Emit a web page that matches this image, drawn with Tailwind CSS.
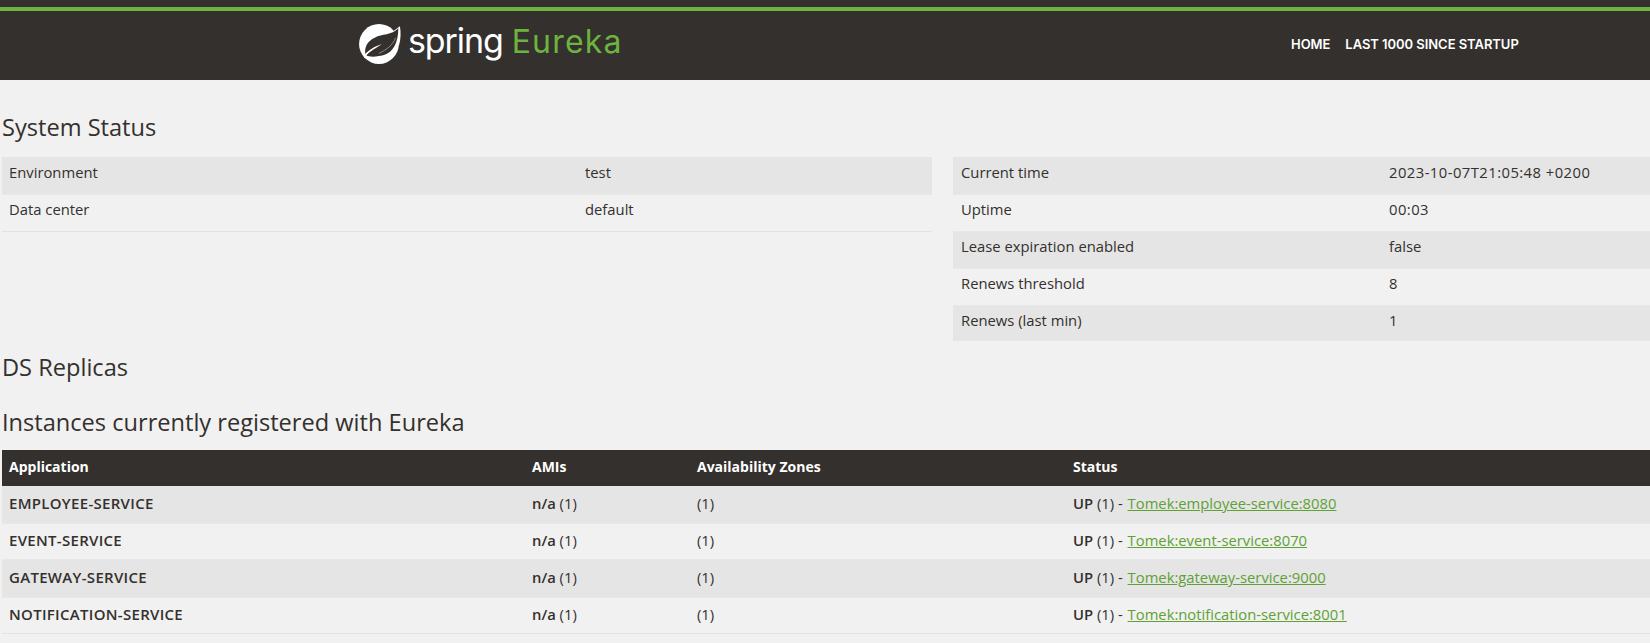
<!DOCTYPE html>
<html lang="en">
<head>
<meta charset="utf-8">
<title>Eureka</title>
<script src="https://cdn.jsdelivr.net/npm/@tailwindcss/browser@4"></script>
</head>
<body class="bg-[#f1f1f1] text-[#34302d] font-['Open_Sans',sans-serif] text-[14.8px] overflow-hidden h-[643px]">
<header class="h-[80px] bg-[#34302d] pt-[7px]">
  <div class="h-[4px] bg-[#6db33f]"></div>
  <div class="relative h-[69px] flex items-center">
    <div class="flex items-center ml-[358px] mt-[-4px]">
      <svg width="44" height="44" viewBox="4 4 42 42" class="shrink-0">
        <circle cx="24" cy="25" r="19" fill="#fff"/>
        <path fill="#fff" d="M44 8C45 14 45 20 43 27L36 14Z"/>
        <path fill="#34302d" d="M42.500 10C36 17 27 15 20 19C13 22 10 28 11 34.500C14 31 20 27 27 25C21 29 15 32 12 36C16 38 24 37 30 35C37 33 42.500 24 42.500 10Z"/>
        <path fill="none" stroke="#8f8c8a" stroke-width="0.900" d="M40 19C37 26 32 30 24 34"/>
        <circle cx="11" cy="37" r="1.500" fill="#fff"/>
      </svg>
      <span class="ml-[6px] text-white text-[34px] leading-none font-['Inter',sans-serif] tracking-[-1.100px] mt-[-5px]">spring</span>
      <span class="ml-[9px] text-[#6db33f] text-[32px] leading-none font-['Inter',sans-serif] font-normal tracking-[1.200px] mt-[-3px]">Eureka</span>
    </div>
    <nav class="absolute left-[1291px] top-[24px] flex gap-[15px] text-white text-[13px] tracking-[-0.050px] font-semibold font-['Inter',sans-serif]">
      <a>HOME</a><a>LAST 1000 SINCE STARTUP</a>
    </nav>
  </div>
</header>
<main class="pl-[2px]">
  <h1 class="text-[23.6px] leading-[28px] mt-[33px] mb-[16px] font-normal">System Status</h1>
  <div class="flex gap-[21px] items-start">
    <table class="w-[930px] table-fixed border-collapse">
      <colgroup><col class="w-[575px]"><col></colgroup>
      <tbody>
        <tr class="h-[37px] bg-[#e5e5e5] border-b border-[#e8e8e8]"><td class="pl-[7px] pb-[7px]">Environment</td><td class="pl-[8px] pb-[7px]">test</td></tr>
        <tr class="h-[37px] border-b border-[#e2e2e2]"><td class="pl-[7px] pb-[7px]">Data center</td><td class="pl-[8px] pb-[7px]">default</td></tr>
      </tbody>
    </table>
    <table class="flex-1 table-fixed border-collapse">
      <colgroup><col class="w-[428px]"><col></colgroup>
      <tbody>
        <tr class="h-[37px] bg-[#e5e5e5] border-b border-[#e8e8e8]"><td class="pl-[8px] pb-[7px]">Current time</td><td class="pl-[8px] pb-[7px] tracking-[0.450px]">2023-10-07T21:05:48 +0200</td></tr>
        <tr class="h-[37px] border-b border-[#e8e8e8]"><td class="pl-[8px] pb-[7px]">Uptime</td><td class="pl-[8px] pb-[7px] tracking-[0.450px]">00:03</td></tr>
        <tr class="h-[37px] bg-[#e5e5e5] border-b border-[#e8e8e8]"><td class="pl-[8px] pb-[7px]">Lease expiration enabled</td><td class="pl-[8px] pb-[7px]">false</td></tr>
        <tr class="h-[37px] border-b border-[#e8e8e8]"><td class="pl-[8px] pb-[7px]">Renews threshold</td><td class="pl-[8px] pb-[7px]">8</td></tr>
        <tr class="h-[35.500px] bg-[#e5e5e5]"><td class="pl-[8px] pb-[6px]">Renews (last min)</td><td class="pl-[8px] pb-[6px]">1</td></tr>
      </tbody>
    </table>
  </div>
  <h1 class="text-[23.6px] leading-[28px] mt-[12px] mb-[27px] font-normal">DS Replicas</h1>
  <h1 class="text-[23.6px] leading-[28px] mb-[14px] font-normal">Instances currently registered with Eureka</h1>
  <table class="w-full table-fixed border-collapse">
    <colgroup><col class="w-[523px]"><col class="w-[165px]"><col class="w-[376px]"><col></colgroup>
    <thead>
      <tr class="h-[36px] bg-[#34302d] text-white text-left text-[14px]">
        <th class="pl-[7px] pb-[2px] font-bold">Application</th><th class="pl-[7px] pb-[2px] font-bold">AMIs</th><th class="pl-[7px] pb-[2px] font-bold">Availability Zones</th><th class="pl-[7px] pb-[2px] font-bold">Status</th>
      </tr>
    </thead>
    <tbody>
      <tr class="h-[38px] bg-[#e5e5e5] border-b border-[#e8e8e8]"><td class="pl-[7px] pb-[2px] font-semibold text-[15px] tracking-[0.300px]">EMPLOYEE-SERVICE</td><td class="pl-[7px] pb-[2px]"><b class="font-semibold">n/a</b> (1)</td><td class="pl-[7px] pb-[2px]">(1)</td><td class="pl-[7px] pb-[2px]"><b class="font-semibold">UP</b> (1) - <a class="ml-[1px] text-[#5fa134] underline">Tomek:employee-service:8080</a></td></tr>
      <tr class="h-[36px] border-b border-[#e8e8e8]"><td class="pl-[7px] pb-[2px] font-semibold text-[15px] tracking-[0.300px]">EVENT-SERVICE</td><td class="pl-[7px] pb-[2px]"><b class="font-semibold">n/a</b> (1)</td><td class="pl-[7px] pb-[2px]">(1)</td><td class="pl-[7px] pb-[2px]"><b class="font-semibold">UP</b> (1) - <a class="ml-[1px] text-[#5fa134] underline">Tomek:event-service:8070</a></td></tr>
      <tr class="h-[38px] bg-[#e5e5e5] border-b border-[#e8e8e8]"><td class="pl-[7px] pb-[2px] font-semibold text-[15px] tracking-[0.300px]">GATEWAY-SERVICE</td><td class="pl-[7px] pb-[2px]"><b class="font-semibold">n/a</b> (1)</td><td class="pl-[7px] pb-[2px]">(1)</td><td class="pl-[7px] pb-[2px]"><b class="font-semibold">UP</b> (1) - <a class="ml-[1px] text-[#5fa134] underline">Tomek:gateway-service:9000</a></td></tr>
      <tr class="h-[36px] border-b border-[#e4e4e4]"><td class="pl-[7px] pb-[2px] font-semibold text-[15px] tracking-[0.300px]">NOTIFICATION-SERVICE</td><td class="pl-[7px] pb-[2px]"><b class="font-semibold">n/a</b> (1)</td><td class="pl-[7px] pb-[2px]">(1)</td><td class="pl-[7px] pb-[2px]"><b class="font-semibold">UP</b> (1) - <a class="ml-[1px] text-[#5fa134] underline">Tomek:notification-service:8001</a></td></tr>
    </tbody>
  </table>
</main>
</body>
</html>
